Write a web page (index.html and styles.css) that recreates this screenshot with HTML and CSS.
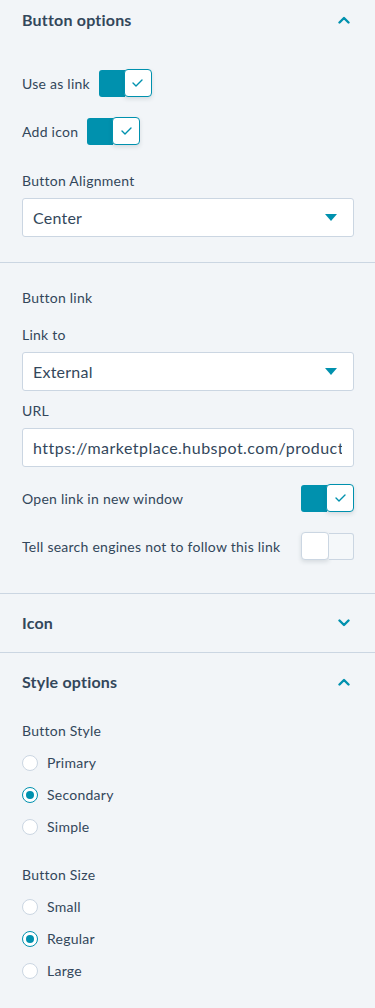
FILE: index.html
```html
<!DOCTYPE html>
<html lang="en">
<head>
<meta charset="utf-8">
<title>Button options</title>
<link rel="stylesheet" href="styles.css">
</head>
<body>
<div class="sidebar">

  <section class="panel">
    <div class="panel-head panel-head-first">
      <span class="panel-title">Button options</span>
      <svg class="chev" width="12" height="8" viewBox="0 0 12 8"><path d="M1.5 6.5 L6 2 L10.5 6.5" fill="none" stroke="#0091ae" stroke-width="2.4" stroke-linecap="round" stroke-linejoin="round"/></svg>
    </div>
    <div class="panel-body body-1">
      <div class="toggle-row inline">
        <span class="label">Use as link</span>
        <span class="toggle on"><span class="track"></span><span class="knob"><svg width="11" height="8" viewBox="0 0 11 8"><path d="M1 4 L4 7 L10 1" fill="none" stroke="#0091ae" stroke-width="1.4" stroke-linecap="round" stroke-linejoin="round"/></svg></span></span>
      </div>
      <div class="toggle-row inline gap-21">
        <span class="label">Add icon</span>
        <span class="toggle on"><span class="track"></span><span class="knob"><svg width="11" height="8" viewBox="0 0 11 8"><path d="M1 4 L4 7 L10 1" fill="none" stroke="#0091ae" stroke-width="1.4" stroke-linecap="round" stroke-linejoin="round"/></svg></span></span>
      </div>
      <div class="field-label gap-26">Button Alignment</div>
      <div class="select"><span class="value">Center</span><span class="caret"></span></div>
    </div>
  </section>

  <section class="panel">
    <div class="panel-body body-2">
      <div class="field-label">Button link</div>
      <div class="field-label gap-10">Link to</div>
      <div class="select"><span class="value">External</span><span class="caret"></span></div>
      <div class="field-label gap-10">URL</div>
      <div class="input"><span class="value url">https://marketplace.hubspot.com/products/</span></div>
      <div class="toggle-row spread gap-18">
        <span class="label">Open link in new window</span>
        <span class="toggle on"><span class="track"></span><span class="knob"><svg width="11" height="8" viewBox="0 0 11 8"><path d="M1 4 L4 7 L10 1" fill="none" stroke="#0091ae" stroke-width="1.4" stroke-linecap="round" stroke-linejoin="round"/></svg></span></span>
      </div>
      <div class="toggle-row spread gap-21">
        <span class="label">Tell search engines not to follow this link</span>
        <span class="toggle off"><span class="knob"></span><span class="track"></span></span>
      </div>
    </div>
  </section>

  <section class="panel">
    <div class="panel-head">
      <span class="panel-title">Icon</span>
      <svg class="chev" width="12" height="8" viewBox="0 0 12 8"><path d="M1.5 1.5 L6 6 L10.5 1.5" fill="none" stroke="#0091ae" stroke-width="2.4" stroke-linecap="round" stroke-linejoin="round"/></svg>
    </div>
  </section>

  <section class="panel last">
    <div class="panel-head">
      <span class="panel-title">Style options</span>
      <svg class="chev" width="12" height="8" viewBox="0 0 12 8"><path d="M1.5 6.5 L6 2 L10.5 6.5" fill="none" stroke="#0091ae" stroke-width="2.4" stroke-linecap="round" stroke-linejoin="round"/></svg>
    </div>
    <div class="panel-body body-4">
      <div class="field-label">Button Style</div>
      <div class="radio-group">
        <div class="radio"><span class="dot"></span><span class="radio-text">Primary</span></div>
        <div class="radio checked"><span class="dot"></span><span class="radio-text">Secondary</span></div>
        <div class="radio"><span class="dot"></span><span class="radio-text">Simple</span></div>
      </div>
      <div class="field-label gap-28">Button Size</div>
      <div class="radio-group">
        <div class="radio"><span class="dot"></span><span class="radio-text">Small</span></div>
        <div class="radio checked"><span class="dot"></span><span class="radio-text">Regular</span></div>
        <div class="radio"><span class="dot"></span><span class="radio-text">Large</span></div>
      </div>
    </div>
  </section>

</div>
</body>
</html>
```

FILE: styles.css
```css
* { box-sizing: border-box; }

html, body {
  margin: 0;
  padding: 0;
  background: #f2f5f8;
}

body {
  font-family: Lato, "Open Sans", sans-serif;
  color: #33475b;
  width: 375px;
  min-height: 1008px;
}

.sidebar {
  display: flex;
  flex-direction: column;
}

.panel {
  border-bottom: 1px solid #cbd6e2;
}

.panel.last {
  border-bottom: none;
}

.panel-head {
  height: 58px;
  padding: 0 25px 0 22px;
  display: flex;
  align-items: center;
  justify-content: space-between;
}

.panel-head-first {
  height: 40px;
}

.panel-title {
  font-size: 16px;
  font-weight: 700;
  line-height: 20px;
  letter-spacing: 0.2px;
  color: #33475b;
}

.chev {
  display: block;
}

.panel-body {
  padding: 0 21px 0 22px;
  display: flex;
  flex-direction: column;
}

.body-1 { padding-top: 30px; padding-bottom: 25px; }
.body-2 { padding-top: 25px; padding-bottom: 33px; }
.body-4 { padding-top: 10px; padding-bottom: 30px; }

.label, .field-label {
  font-size: 14px;
  line-height: 20px;
  letter-spacing: 0.25px;
  color: #33475b;
}

.field-label {
  height: 20px;
  margin-bottom: 7px;
}

.gap-10 { margin-top: 10px; }
.gap-18 { margin-top: 18px; }
.gap-21 { margin-top: 21px; }
.gap-26 { margin-top: 26px; }
.gap-28 { margin-top: 28px; }

.toggle-row {
  display: flex;
  align-items: center;
  height: 27px;
}

.toggle-row.inline { gap: 9px; }
.toggle-row.spread { justify-content: space-between; }

.toggle {
  display: flex;
  width: 53px;
  height: 27px;
  flex-shrink: 0;
}

.toggle .track {
  flex: 1;
  height: 27px;
}

.toggle.on .track {
  background: #0091ae;
  border-radius: 3px 0 0 3px;
}

.toggle.off .track {
  background: #f5f8fa;
  border: 1px solid #cbd6e2;
  border-left: none;
  border-radius: 0 3px 3px 0;
}

.toggle .knob {
  width: 28px;
  height: 28px;
  margin-top: -1px;
  background: #ffffff;
  border-radius: 4px;
  display: flex;
  align-items: center;
  justify-content: center;
  box-shadow: 0 2px 4px rgba(45, 62, 80, 0.14);
}

.toggle.on .knob {
  border: 1px solid #0091ae;
  margin-left: -1px;
}

.toggle.off .knob {
  border: 1px solid #cbd6e2;
}

.select, .input {
  height: 39px;
  background: #ffffff;
  border: 1px solid #cbd6e2;
  border-radius: 3px;
  display: flex;
  align-items: center;
  padding: 0 16px 0 10px;
  overflow: hidden;
}

.input {
  padding-right: 11px;
}

.value {
  font-size: 16px;
  line-height: 22px;
  letter-spacing: 0.23px;
  color: #33475b;
  white-space: nowrap;
  flex: 1;
  overflow: hidden;
}

.value.url {
  letter-spacing: 0.48px;
  text-overflow: clip;
}

.caret {
  width: 0;
  height: 0;
  border-left: 6px solid transparent;
  border-right: 6px solid transparent;
  border-top: 7px solid #0091ae;
  flex-shrink: 0;
}

.radio-group {
  display: flex;
  flex-direction: column;
  gap: 12px;
  margin-top: 5px;
}

.radio {
  display: flex;
  align-items: center;
  gap: 9px;
  height: 20px;
}

.dot {
  width: 16px;
  height: 16px;
  border-radius: 50%;
  border: 1px solid #cbd6e2;
  background: #ffffff;
  flex-shrink: 0;
  display: flex;
  align-items: center;
  justify-content: center;
}

.radio.checked .dot {
  border: 1.5px solid #0091ae;
}

.radio.checked .dot::after {
  content: "";
  width: 8px;
  height: 8px;
  border-radius: 50%;
  background: #0091ae;
}

.radio-text {
  font-size: 14px;
  line-height: 20px;
  letter-spacing: 0.25px;
  color: #33475b;
}
```
